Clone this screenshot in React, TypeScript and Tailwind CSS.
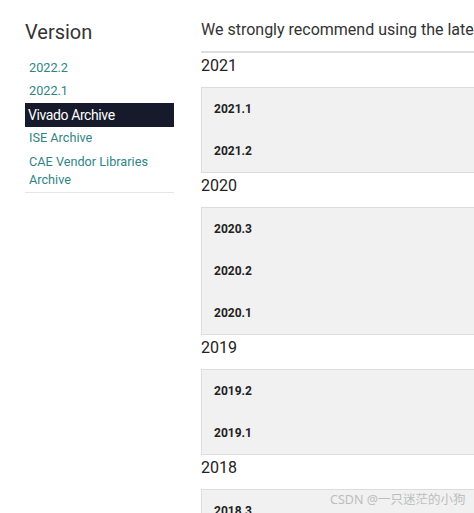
import React from "react";

const sections: { year: string; items: string[] }[] = [
  { year: "2021", items: ["2021.1", "2021.2"] },
  { year: "2020", items: ["2020.3", "2020.2", "2020.1"] },
  { year: "2019", items: ["2019.2", "2019.1"] },
  { year: "2018", items: ["2018.3", "2018.2", "2018.1"] },
];

const links = [
  { label: "2022.2", active: false },
  { label: "2022.1", active: false },
  { label: "Vivado Archive", active: true },
  { label: "ISE Archive", active: false },
  { label: "CAE Vendor Libraries Archive", active: false },
];

export default function App() {
  return (
    <div
      className="relative w-[474px] h-[513px] overflow-hidden bg-white"
      style={{ fontFamily: "Roboto, 'Noto Sans', Arial, sans-serif" }}
    >
      <div className="flex items-start pl-[25px] pt-[18px] gap-[27px]">
        <aside className="w-[149px] shrink-0">
          <h2 className="text-[20px] leading-[28px] text-[#333] font-normal mb-[10px]">Version</h2>
          <ul className="border-b border-[#e6e6e6]">
            {links.map((l) => (
              <li
                key={l.label}
                className={
                  l.active
                    ? "bg-[#161a2b] text-white px-[3px] py-[2.5px] text-[14px] tracking-[-0.4px] leading-[18.5px]"
                    : "text-[#2f8585] px-[4px] py-[2.5px] text-[12.7px] leading-[18.5px]"
                }
              >
                {l.label}
              </li>
            ))}
          </ul>
        </aside>
        <main className="w-[600px] shrink-0">
          <p className="text-[16px] leading-[24px] text-[#333] whitespace-nowrap mb-[9px]">
            We strongly recommend using the latest version of the tools.
          </p>
          <div className="border-t-2 border-[#dddddd]" />
          {sections.map((s) => (
            <section key={s.year}>
              <h3 className="mt-[3px] text-[16px] leading-[19px] text-[#222] mb-[12px]">{s.year}</h3>
              <div className="border border-[#dcdcdc] bg-[#f1f1f1]">
                {s.items.map((it) => (
                  <div
                    key={it}
                    className="h-[42px] flex items-center pl-[12px] text-[12px] font-bold text-[#222]"
                  >
                    {it}
                  </div>
                ))}
              </div>
            </section>
          ))}
        </main>
      </div>
      <div
        className="absolute left-[330px] top-[491px] text-[12.5px] leading-[18px] text-[#bdbdbd] whitespace-nowrap"
        style={{ fontFamily: "'Noto Sans', 'Noto Sans CJK SC', sans-serif" }}
      >
        CSDN @一只迷茫的小狗
      </div>
    </div>
  );
}
